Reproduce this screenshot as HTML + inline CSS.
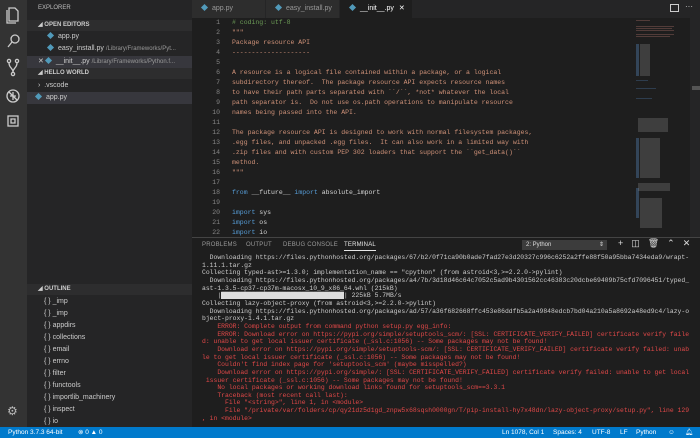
<!DOCTYPE html>
<html><head><meta charset="utf-8"><style>
*{margin:0;padding:0;box-sizing:border-box}
body{width:700px;height:438px;background:#1e1e1e;font-family:"Liberation Sans",sans-serif;overflow:hidden;position:relative;color:#ccc}
.abs{position:absolute}
#act{left:0;top:0;width:27px;height:427px;background:#333}
#side{left:27px;top:0;width:165px;height:427px;background:#252526;font-size:7px}
.sh{position:absolute;left:0;width:165px;height:11px;line-height:11px;font-weight:bold;font-size:6px;color:#ccc;background:#2d2d2e;padding-left:11px}
.si{position:absolute;height:12px;line-height:12px;white-space:nowrap;color:#ccc;font-size:7px}
.dia{display:inline-block;width:5px;height:5px;background:#519aba;transform:rotate(45deg);margin-right:5px;vertical-align:0}
.dim{color:#999;font-size:6px}
#tabs{left:192px;top:0;width:508px;height:18px;background:#252526}
.tab{position:absolute;top:0;height:18px;line-height:18px;font-size:7px;color:#999;background:#2d2d2d;padding-left:10px;white-space:nowrap}
#code{left:192px;top:18px;width:440px;font-family:"Liberation Mono",monospace;font-size:6.5px;line-height:10px}
.ln{position:absolute;left:0;width:28px;text-align:right;color:#858585}
.cl{position:absolute;left:40px;white-space:pre;color:#ce9178}
.k{color:#569cd6}.w{color:#d4d4d4}.g{color:#6a9955}
#panel{left:192px;top:237px;width:508px;height:190px;background:#1e1e1e;border-top:1px solid #444}
.pt{position:absolute;top:4px;font-size:6px;color:#999;letter-spacing:.2px}
#term{position:absolute;left:10px;top:16px;font-family:"Liberation Mono",monospace;font-size:6.4px;line-height:7.65px;white-space:pre;color:#ccc}
.r{color:#e04848}
#status{left:0;top:427px;width:700px;height:11px;background:#007acc;color:#fff;font-size:6.5px;line-height:11px}
</style></head><body>
<div id="act" class="abs">
<svg width="27" height="140" viewBox="0 0 27 140" fill="none" stroke="#ccc" stroke-width="1.3">
<path d="M9 8h6l3 3v10H9z M7 10v13h9"/>
<circle cx="15" cy="39" r="4"/><path d="M12 42l-4 5"/>
<circle cx="9" cy="61" r="1.6"/><circle cx="17" cy="61" r="1.6"/><circle cx="13" cy="74" r="1.6"/><path d="M9 63c0 5 4 5 4 9M17 63c0 5-4 5-4 9"/>
<circle cx="13" cy="96" r="6"/><path d="M9 92l8 8M10 96h6M13 92v8"/>
<rect x="8" y="116" width="10" height="10"/><path d="M11 119h4v4h-4z"/>
</svg>
<div class="abs" style="left:7px;top:404px;color:#bbb;font-size:12px">⚙</div>
</div>
<div id="side" class="abs">
<div class="abs" style="left:11px;top:5px;font-size:6px;color:#bbb">EXPLORER</div>
<div class="sh" style="top:20px">◢ OPEN EDITORS</div>
<div class="si" style="left:21px;top:31px"><span class="dia"></span>app.py</div>
<div class="si" style="left:21px;top:43px"><span class="dia"></span>easy_install.py <span class="dim">/Library/Frameworks/Pyt...</span></div>
<div class="si" style="left:0;top:56px;width:165px;background:#37373d;padding-left:11px"><span style="font-size:7px">✕</span> <span class="dia"></span>__init__.py <span class="dim">/Library/Frameworks/Python.f...</span></div>
<div class="sh" style="top:68px">◢ HELLO WORLD</div>
<div class="si" style="left:11px;top:80px">›&nbsp; .vscode</div>
<div class="si" style="left:0;top:92px;width:165px;background:#37373d;padding-left:9px"><span class="dia"></span>app.py</div>
<div class="sh" style="top:284px">◢ OUTLINE</div>
<div class="si" style="left:17px;top:296px">{ } _imp</div>
<div class="si" style="left:17px;top:308px">{ } _imp</div>
<div class="si" style="left:17px;top:320px">{ } appdirs</div>
<div class="si" style="left:17px;top:332px">{ } collections</div>
<div class="si" style="left:17px;top:344px">{ } email</div>
<div class="si" style="left:17px;top:356px">{ } errno</div>
<div class="si" style="left:17px;top:368px">{ } filter</div>
<div class="si" style="left:17px;top:380px">{ } functools</div>
<div class="si" style="left:17px;top:392px">{ } importlib_machinery</div>
<div class="si" style="left:17px;top:404px">{ } inspect</div>
<div class="si" style="left:17px;top:416px">{ } io</div>
</div>
<div id="tabs" class="abs">
<div class="tab" style="left:0;width:73px"><span class="dia"></span>app.py</div>
<div class="tab" style="left:74px;width:73px"><span class="dia"></span>easy_install.py</div>
<div class="tab" style="left:148px;width:72px;background:#1e1e1e;color:#fff"><span class="dia"></span>__init__.py <span style="margin-left:3px">✕</span></div>
<div class="abs" style="left:478px;top:4px;width:9px;height:8px;border:1.2px solid #ccc"></div>
<div class="abs" style="left:493px;top:2px;font-size:8px;color:#ccc">···</div>
</div>
<div id="code" class="abs">
<div class="ln" style="top:0">1</div><div class="cl g" style="top:0"># coding: utf-8</div>
<div class="ln" style="top:10px">2</div><div class="cl" style="top:10px">"""</div>
<div class="ln" style="top:20px">3</div><div class="cl" style="top:20px">Package resource API</div>
<div class="ln" style="top:30px">4</div><div class="cl" style="top:30px">--------------------</div>
<div class="ln" style="top:40px">5</div>
<div class="ln" style="top:50px">6</div><div class="cl" style="top:50px">A resource is a logical file contained within a package, or a logical</div>
<div class="ln" style="top:60px">7</div><div class="cl" style="top:60px">subdirectory thereof.  The package resource API expects resource names</div>
<div class="ln" style="top:70px">8</div><div class="cl" style="top:70px">to have their path parts separated with ``/``, *not* whatever the local</div>
<div class="ln" style="top:80px">9</div><div class="cl" style="top:80px">path separator is.  Do not use os.path operations to manipulate resource</div>
<div class="ln" style="top:90px">10</div><div class="cl" style="top:90px">names being passed into the API.</div>
<div class="ln" style="top:100px">11</div>
<div class="ln" style="top:110px">12</div><div class="cl" style="top:110px">The package resource API is designed to work with normal filesystem packages,</div>
<div class="ln" style="top:120px">13</div><div class="cl" style="top:120px">.egg files, and unpacked .egg files.  It can also work in a limited way with</div>
<div class="ln" style="top:130px">14</div><div class="cl" style="top:130px">.zip files and with custom PEP 302 loaders that support the ``get_data()``</div>
<div class="ln" style="top:140px">15</div><div class="cl" style="top:140px">method.</div>
<div class="ln" style="top:150px">16</div><div class="cl" style="top:150px">"""</div>
<div class="ln" style="top:160px">17</div>
<div class="ln" style="top:170px">18</div><div class="cl w" style="top:170px"><span class="k">from</span> __future__ <span class="k">import</span> absolute_import</div>
<div class="ln" style="top:180px">19</div>
<div class="ln" style="top:190px">20</div><div class="cl w" style="top:190px"><span class="k">import</span> sys</div>
<div class="ln" style="top:200px">21</div><div class="cl w" style="top:200px"><span class="k">import</span> os</div>
<div class="ln" style="top:210px">22</div><div class="cl w" style="top:210px"><span class="k">import</span> io</div>
</div>
<svg class="abs" style="left:634px;top:18px" width="56" height="219">
<g fill="#b0706a" opacity=".45"><rect x="2" y="2" width="14" height=".8"/><rect x="2" y="8" width="38" height=".8"/><rect x="2" y="10" width="36" height=".8"/><rect x="2" y="12" width="38" height=".8"/><rect x="2" y="16" width="38" height=".8"/><rect x="2" y="18" width="34" height=".8"/></g>
<g fill="#5a8fc8" opacity=".35">
<rect x="2" y="26" width="3" height="32"/><rect x="2" y="62" width="12" height=".8"/><rect x="2" y="70" width="20" height=".8"/><rect x="2" y="80" width="16" height=".8"/><rect x="2" y="120" width="3" height="40"/><rect x="2" y="170" width="3" height="30"/></g>
<g fill="#888" opacity=".3">
<rect x="6" y="26" width="10" height="32"/><rect x="4" y="100" width="30" height="14"/><rect x="6" y="120" width="20" height="40"/><rect x="4" y="165" width="32" height="8"/><rect x="6" y="180" width="22" height="30"/></g>
</svg>
<div class="abs" style="left:690px;top:18px;width:10px;height:219px;background:#252526"></div>
<div class="abs" style="left:692px;top:86px;width:8px;height:4px;background:#555"></div>
<div id="panel" class="abs">
<div class="pt" style="left:10px">PROBLEMS</div>
<div class="pt" style="left:54px">OUTPUT</div>
<div class="pt" style="left:91px">DEBUG CONSOLE</div>
<div class="pt" style="left:152px;color:#e7e7e7;border-bottom:1px solid #e7e7e7;padding-bottom:2px">TERMINAL</div>
<div class="abs" style="left:330px;top:2px;width:85px;height:10px;background:#3c3c3c;font-size:6px;line-height:10px;padding-left:4px;color:#ddd">2: Python<span style="float:right;margin-right:3px">⇕</span></div>
<div class="abs" style="left:426px;top:0;font-size:9px;color:#ddd;letter-spacing:8px">+◫🗑︎⌃✕</div>
<div id="term">  Downloading https://files.pythonhosted.org/packages/67/b2/0f71ca90b0ade7fad27e3d20327c996c6252a2ffe88f50a95bba7434eda9/wrapt-
1.11.1.tar.gz
Collecting typed-ast>=1.3.0; implementation_name == "cpython" (from astroid<3,>=2.2.0->pylint)
  Downloading https://files.pythonhosted.org/packages/a4/7b/3d18d46c64c7052c5ad9b4301562cc46383c20dcbe69409b75cfd7096451/typed_
ast-1.3.5-cp37-cp37m-macosx_10_9_x86_64.whl (215kB)
    |<span style="background:#ddd;color:#ddd">████████████████████████████████</span>| 225kB 5.7MB/s
Collecting lazy-object-proxy (from astroid<3,>=2.2.0->pylint)
  Downloading https://files.pythonhosted.org/packages/ad/57/a36f682668ffc453e86ddfb5a2a49848edcb7bd04a210a5a8692a48ed9c4/lazy-o
bject-proxy-1.4.1.tar.gz
<span class="r">    ERROR: Complete output from command python setup.py egg_info:
    ERROR: Download error on https://pypi.org/simple/setuptools_scm/: [SSL: CERTIFICATE_VERIFY_FAILED] certificate verify faile
d: unable to get local issuer certificate (_ssl.c:1056) -- Some packages may not be found!
    Download error on https://pypi.org/simple/setuptools-scm/: [SSL: CERTIFICATE_VERIFY_FAILED] certificate verify failed: unab
le to get local issuer certificate (_ssl.c:1056) -- Some packages may not be found!
    Couldn't find index page for 'setuptools_scm' (maybe misspelled?)
    Download error on https://pypi.org/simple/: [SSL: CERTIFICATE_VERIFY_FAILED] certificate verify failed: unable to get local
 issuer certificate (_ssl.c:1056) -- Some packages may not be found!
    No local packages or working download links found for setuptools_scm==3.3.1
    Traceback (most recent call last):
      File "&lt;string&gt;", line 1, in &lt;module&gt;
      File "/private/var/folders/cp/qy21dz5d1gd_znpw5x68sqsh0000gn/T/pip-install-hy7x48dn/lazy-object-proxy/setup.py", line 129
, in &lt;module&gt;</span></div>
</div>
<div id="status" class="abs">
<span class="abs" style="left:8px">Python 3.7.3 64-bit</span>
<span class="abs" style="left:78px">⊗ 0 ▲ 0</span>
<span class="abs" style="left:502px">Ln 1078, Col 1</span>
<span class="abs" style="left:553px">Spaces: 4</span>
<span class="abs" style="left:592px">UTF-8</span>
<span class="abs" style="left:620px">LF</span>
<span class="abs" style="left:636px">Python</span>
<span class="abs" style="left:668px">☺</span>
<span class="abs" style="left:685px">🔔︎</span>
</div>
</body></html>
